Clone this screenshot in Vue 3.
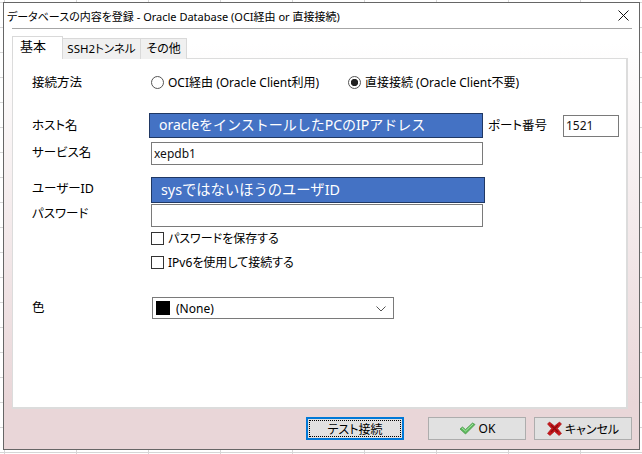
<script setup>
const tabs = [
  { name: '基本', active: true },
  { name: 'SSH2トンネル', active: false },
  { name: 'その他', active: false },
]
</script>

<template>
  <div class="desk">
    <div class="window">
      <div class="title">
        <span class="title-text">データベースの内容を登録 - Oracle Database (OCI経由 or 直接接続)</span>
        <svg class="close" width="11" height="11" viewBox="0 0 11 11">
          <path d="M.5.5l10 10M10.5.5l-10 10" stroke="#111" stroke-width="1" fill="none" />
        </svg>
      </div>
      <div class="rule"></div>
      <div class="tabs">
        <div v-for="t in tabs" :key="t.name" class="tab" :class="{ active: t.active }">{{ t.name }}</div>
      </div>
      <div class="pane">
        <div class="row r-method">
          <span class="label">接続方法</span>
          <span class="radio"></span>
          <span class="opt opt-oci">OCI経由 (Oracle Client利用)</span>
          <span class="radio on"></span>
          <span class="opt">直接接続 (Oracle Client不要)</span>
        </div>
        <div class="row r-host">
          <span class="label">ホスト名</span>
          <div class="note note-host">oracleをインストールしたPCのIPアドレス</div>
          <span class="port-label">ポート番号</span>
          <div class="input port">1521</div>
        </div>
        <div class="row r-service">
          <span class="label up">サービス名</span>
          <div class="input wide">xepdb1</div>
        </div>
        <div class="row r-user">
          <span class="label upper">ユーザーID</span>
          <div class="note note-user">sysではないほうのユーザID</div>
        </div>
        <div class="row r-pass">
          <span class="label upper">パスワード</span>
          <div class="input wide"></div>
        </div>
        <div class="row r-check1">
          <span class="check"></span>
          <span class="opt">パスワードを保存する</span>
        </div>
        <div class="row r-check2">
          <span class="check"></span>
          <span class="opt">IPv6を使用して接続する</span>
        </div>
        <div class="row r-color">
          <span class="label up">色</span>
          <div class="combo">
            <span class="swatch"></span>
            <span class="combo-text">(None)</span>
            <svg class="chev" width="10" height="6" viewBox="0 0 10 6">
              <path d="M.5.5L5 5 9.5.5" stroke="#555" stroke-width="1" fill="none" />
            </svg>
          </div>
        </div>
      </div>
      <div class="buttons">
        <button class="btn focus"><span class="dots">テスト接続</span></button>
        <button class="btn ok">
          <svg width="17" height="13" viewBox="0 0 17 13">
            <path d="M1 7l2.5-2 3 2.6L13.5 1 16 2.5 6.5 12z" fill="#5cb85c" stroke="#4d9a4d" stroke-width=".8" stroke-linejoin="round" />
            <path d="M3 6l3.5 3L14 2" stroke="#a5e6a5" stroke-width="1" fill="none" />
          </svg>
          <span>OK</span>
        </button>
        <button class="btn cancel">
          <svg width="15" height="15" viewBox="0 0 15 15">
            <path d="M2.5 1L7.5 5 12.5 1 14.5 3 10.5 7.5 14.5 12.5 12 14.5 7.5 10.5 3 14.5.5 12.5 4.5 7.5.5 3z" fill="#c8161b" stroke="#a31518" stroke-width=".6" stroke-linejoin="round" />
            <path d="M4 4l7 7M11 4l-7 7" stroke="#8c0a0d" stroke-width="1.2" fill="none" />
          </svg>
          <span>キャンセル</span>
        </button>
      </div>
    </div>
  </div>
</template>

<style>
html, body { margin: 0; padding: 0; background: #fff; }
</style>

<style scoped>
* { box-sizing: border-box; }
.desk {
  width: 642px;
  height: 454px;
  padding: 2px 2px 0 3px;
  overflow: hidden;
  font-family: "Noto Sans", "Noto Sans CJK JP", sans-serif;
  font-size: 12px;
  font-feature-settings: "palt";
  color: #000;
  background-color: #fff;
  background-image:
    repeating-linear-gradient(to right, #d6d6d6 0 1px, transparent 1px 72px),
    repeating-linear-gradient(to bottom, #d6d6d6 0 1px, transparent 1px 25px);
  background-position: 4px 0, 0 2px;
}
.window {
  width: 637px;
  height: 448px;
  border: 1px solid #666;
  display: flex;
  flex-direction: column;
  background: linear-gradient(to bottom, #fff 0, #fff 40px, #e9d6d8 400px);
}
.title {
  height: 25px;
  display: flex;
  align-items: center;
  justify-content: space-between;
  padding: 0 10px 0 3px;
  background: #fff;
}
.title-text { font-size: 11px; white-space: nowrap; }
.rule {
  height: 1px;
  margin: 0 7px 0 8px;
  background: #a6a6a6;
}
.tabs {
  display: flex;
  align-items: flex-end;
  height: 30px;
  margin-left: 8px;
  position: relative;
  z-index: 1;
  margin-bottom: -1px;
}
.tab {
  height: 21px;
  border: 1px solid #d9d9d9;
  border-bottom: none;
  border-left: none;
  background: #f0f0f0;
  font-size: 11.5px;
  line-height: 19px;
  text-align: center;
  width: 78px;
}
.tab:first-child {
  height: 23px;
  width: 51px;
  padding-right: 9px;
  border-left: 1px solid #d9d9d9;
  background: #fff;
  font-size: 13px;
  line-height: 19px;
}
.tab:last-child { width: 46px; font-size: 12px; }
.pane {
  width: 616px;
  height: 351px;
  margin-left: 8px;
  padding: 13px 0 0 19px;
  background: #fff;
  border: 1px solid #dcdcdc;
  border-width: 1px 2px 2px 1px;
}
.row {
  display: flex;
  align-items: center;
}
.label {
  width: 119px;
  flex: none;
  font-size: 12.5px;
  margin-bottom: 2px;
}
.label.up { margin-bottom: 4px; }
.label.upper { margin-bottom: 6px; }
.opt { font-size: 12px; white-space: nowrap; }
.r-method { height: 20px; }
.radio {
  width: 13px;
  height: 13px;
  flex: none;
  border: 1px solid #555;
  border-radius: 50%;
  margin-right: 4px;
  background: #fff;
}
.radio.on {
  background: radial-gradient(circle, #222 0 3.4px, #fff 3.9px);
}
.opt-oci { width: 180px; }
.r-host { height: 25px; margin-top: 21px; }
.note {
  background: #4472c4;
  border: 1px solid #203864;
  color: #fff;
  font-size: 14px;
  font-feature-settings: normal;
  display: flex;
  align-items: center;
  white-space: nowrap;
  padding-bottom: 3px;
}
.note-host {
  width: 334px;
  height: 25px;
  margin-left: -2px;
  padding-left: 9px;
}
.port-label { margin: 0 0 2px 5px; width: 75px; font-size: 12.5px; flex: none; }
.input {
  border: 1px solid #7a7a7a;
  background: #fff;
  font-size: 12px;
  display: flex;
  align-items: center;
  padding-left: 2px;
  color: #111;
}
.port { width: 56px; height: 22px; }
.wide { width: 332px; height: 23px; }
.r-service { margin-top: 4px; height: 23px; }
.r-user { margin-top: 12px; height: 26px; }
.note-user {
  width: 334px;
  height: 26px;
  padding-left: 9px;
  font-size: 14.3px;
}
.r-pass { margin-top: 1px; height: 23px; }
.r-check1, .r-check2 { padding-left: 119px; height: 14px; }
.r-check1 { margin-top: 4px; }
.r-check2 { margin-top: 10px; }
.check {
  width: 13px;
  height: 13px;
  flex: none;
  border: 1px solid #333;
  margin-right: 4px;
  background: #fff;
}
.r-color { margin-top: 28px; height: 22px; }
.combo {
  width: 242px;
  height: 22px;
  margin-left: 1px;
  border: 1px solid #7a7a7a;
  display: flex;
  align-items: center;
  padding: 0 7px 0 3px;
}
.swatch { width: 14px; height: 14px; background: #000; flex: none; margin-right: 6px; }
.combo-text { flex: 1; font-size: 12px; }
.chev { flex: none; margin-top: 1px; }
.buttons {
  display: flex;
  margin-top: 8px;
  padding-left: 302px;
}
.btn {
  height: 23px;
  width: 98px;
  padding: 0;
  background: #e1e1e1;
  border: 1px solid #adadad;
  font: inherit;
  font-feature-settings: "palt";
  color: #000;
  display: flex;
  align-items: center;
  justify-content: center;
  gap: 3px;
}
.btn.focus {
  border: 2px solid #0078d7;
  width: 98px;
  padding: 1px;
  margin-right: 24px;
}
.dots {
  flex: 1;
  align-self: stretch;
  border: 1px dotted #000;
  display: flex;
  align-items: center;
  justify-content: center;
}
.btn.ok { margin-right: 8px; }
</style>
